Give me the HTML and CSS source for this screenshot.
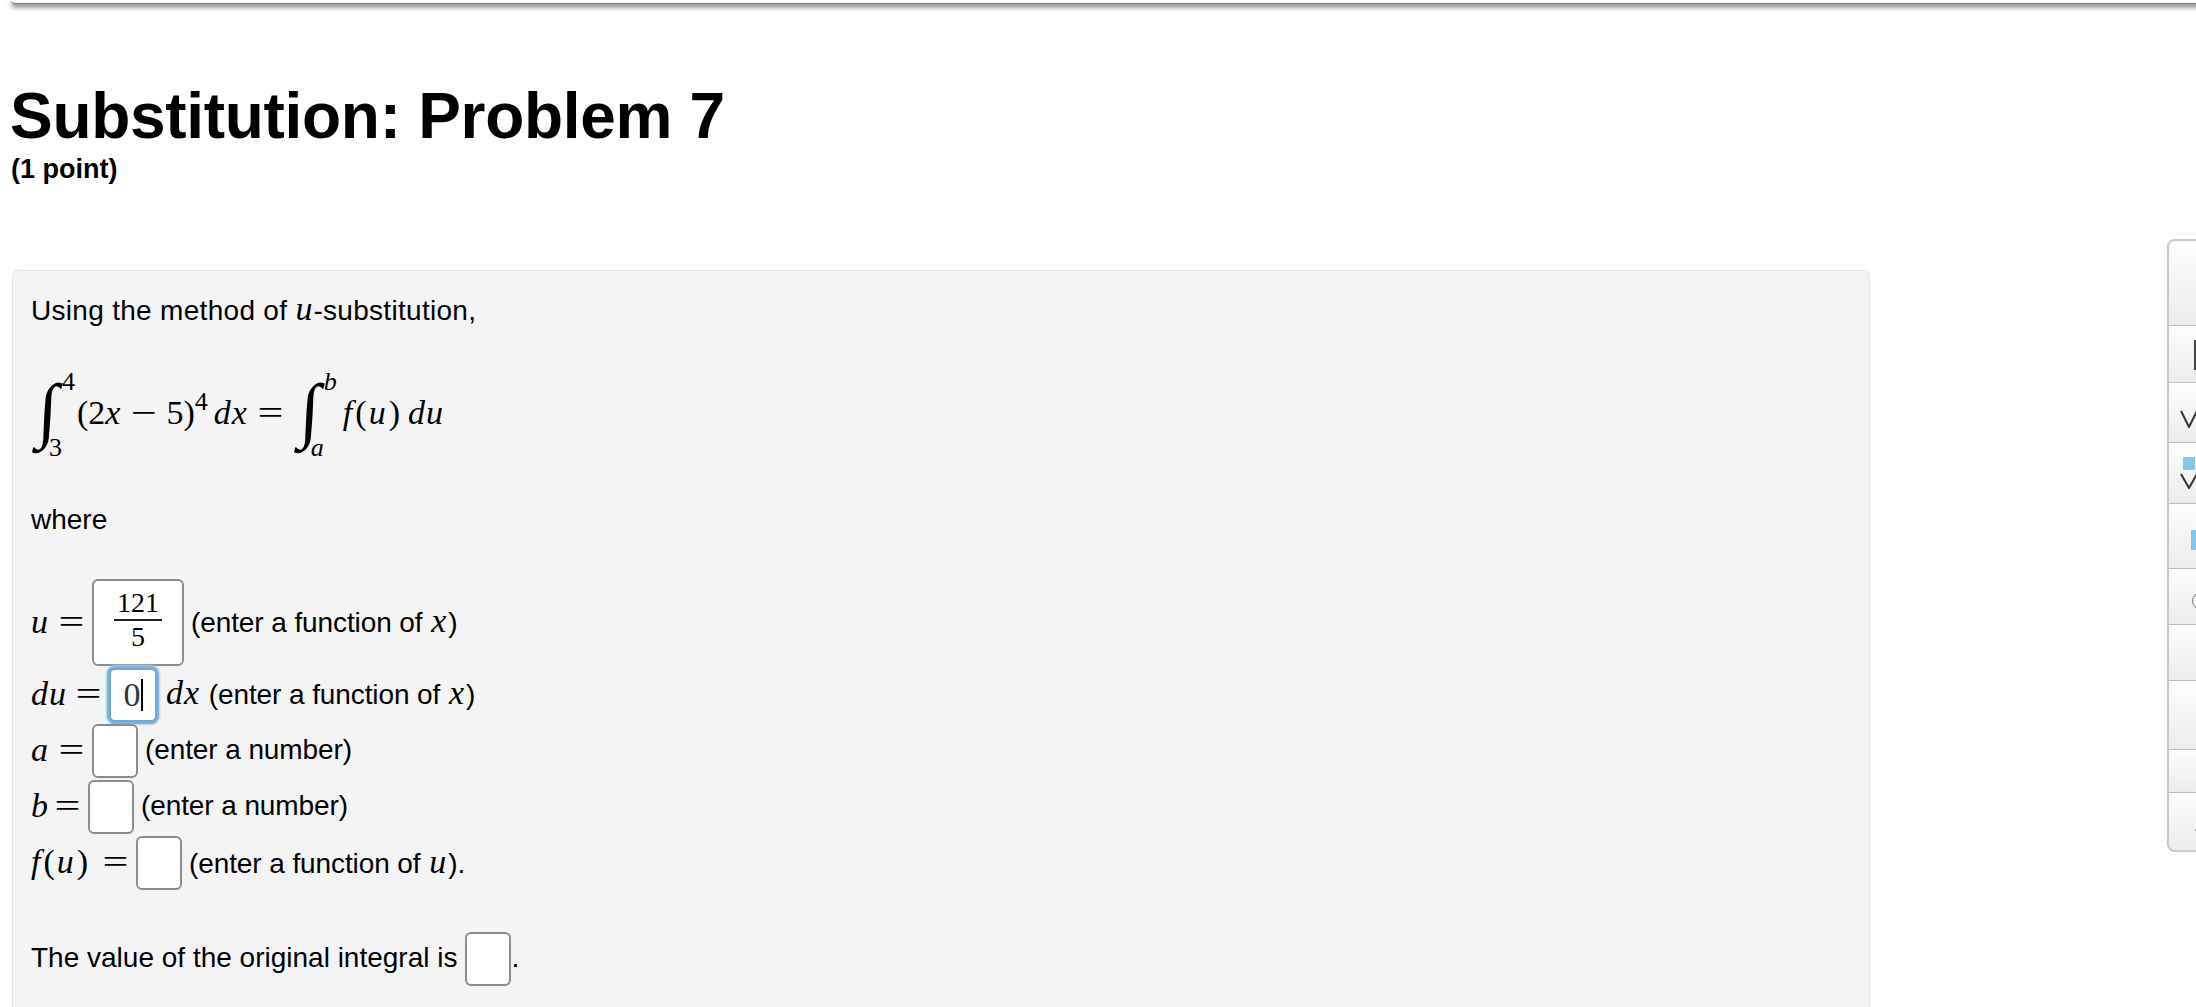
FILE: index.html
```html
<!DOCTYPE html>
<html lang="en">
  <head>
    <meta charset="UTF-8" />
    <title>Substitution: Problem 7</title>
    <link rel="stylesheet" href="styles.css">
  </head>
  <body>
    <div class="topbar"></div>
    <h1>Substitution: Problem 7</h1>
    <div class="points">(1 point)</div>

    <div class="problem">
      <p class="intro">Using the method of <span class="m">u</span>-substitution,</p>

      <div class="equation">
        <span class="int">
          <span class="int-sign">∫</span>
          <span class="limits limits-num">
            <span class="up">4</span>
            <span class="down">3</span>
          </span>
        </span>
        <span class="expr expr-left"><span class="n">(2</span><span class="m">x</span><span class="n op">−</span><span class="n">5)</span><span class="sup">4</span><span class="m dx">dx</span><span class="n op">=</span></span>
        <span class="int">
          <span class="int-sign">∫</span>
          <span class="limits limits-var">
            <span class="up m">b</span>
            <span class="down m">a</span>
          </span>
        </span>
        <span class="expr expr-right"><span class="m">f</span><span class="n paren">(</span><span class="m">u</span><span class="n paren">)</span><span class="m du">du</span></span>
      </div>

      <p class="where">where</p>

      <div class="answers">
        <div class="row row-u">
          <span class="label"><span class="m">u</span><span class="n op">=</span></span>
          <span class="box box-frac">
            <span class="frac"><span class="num">121</span><span class="den">5</span></span>
          </span>
          <span class="hint">(enter a function of <span class="m">x</span>)</span>
        </div>
        <div class="row row-du">
          <span class="label"><span class="m">du</span><span class="n op">=</span></span>
          <span class="box box-focus"><span class="n typed">0</span><span class="caret"></span></span>
          <span class="hint"><span class="m">dx</span> (enter a function of <span class="m">x</span>)</span>
        </div>
        <div class="row row-a">
          <span class="label"><span class="m">a</span><span class="n op">=</span></span>
          <span class="box"></span>
          <span class="hint">(enter a number)</span>
        </div>
        <div class="row row-b">
          <span class="label"><span class="m">b</span><span class="n op">=</span></span>
          <span class="box"></span>
          <span class="hint">(enter a number)</span>
        </div>
        <div class="row row-f">
          <span class="label"><span><span class="m">f</span><span class="n paren">(</span><span class="m">u</span><span class="n paren">)</span></span><span class="n op">=</span></span>
          <span class="box"></span>
          <span class="hint">(enter a function of <span class="m">u</span>).</span>
        </div>
      </div>

      <div class="row row-final">
        <span class="final-text">The value of the original integral is</span>
        <span class="box"></span>
        <span class="final-dot">.</span>
      </div>
    </div>

    <div class="toolbar">
      <div class="tool t1"></div>
      <div class="tool t2"><span class="bar"></span></div>
      <div class="tool t3">
        <svg class="check" width="24" height="18" viewBox="0 0 24 18"><path d="M1 1 L9 17 L17 1" fill="none" stroke="#333" stroke-width="2"/></svg>
      </div>
      <div class="tool t4">
        <span class="sq sq-small"></span>
        <svg class="check" width="24" height="16" viewBox="0 0 24 16"><path d="M1 1 L9 15 L17 1" fill="none" stroke="#333" stroke-width="2"/></svg>
      </div>
      <div class="tool t5"><span class="sq sq-big"></span></div>
      <div class="tool t6"><span class="ring"></span></div>
      <div class="tool t7"></div>
      <div class="tool t8"></div>
      <div class="tool t9"></div>
      <div class="tool t10"><span class="speck"></span></div>
    </div>
  </body>
</html>
```

FILE: styles.css
```css
html,
body {
  margin: 0;
  height: 1007px;
  overflow: hidden;
  background: #fff;
}
body {
  position: relative;
  font-family: "Liberation Sans", Arial, sans-serif;
  font-size: 28px;
  color: #000;
}
.topbar {
  height: 3px;
  margin: 0 -20px 0 11px;
  background: #fff;
  border-bottom: 1px solid #777;
  border-radius: 0 0 6px 6px;
  box-shadow: 0 3px 5px rgba(0, 0, 0, 0.6);
}
h1 {
  margin: 76px 0 0 10px;
  font-size: 64px;
  line-height: 72px;
  letter-spacing: -0.3px;
  font-weight: bold;
}
.points {
  margin: 0 0 0 11px;
  font-size: 27px;
  line-height: 34px;
  font-weight: bold;
}
.problem {
  margin: 84px 0 0 12px;
  width: 1838px;
  height: 800px;
  padding: 0 0 0 18px;
  background: #f4f4f4;
  border: 1px solid #e3e3e3;
  border-radius: 6px;
}
.intro {
  margin: 0;
  padding-top: 20px;
  line-height: 36px;
  letter-spacing: 0.3px;
}
.m {
  font-family: "Liberation Serif", serif;
  font-style: italic;
  font-size: 34px;
  letter-spacing: 1px;
}
.n {
  font-family: "Liberation Serif", serif;
  font-size: 34px;
}
.paren { margin: 0 2px; }
.op {
  display: inline-block;
  width: 23px;
  text-align: center;
  transform: scaleX(1.35);
}
.equation {
  display: flex;
  align-items: center;
  height: 90px;
  margin-top: 42px;
  white-space: pre;
}
.equation .op { margin: 0 11px; }
.int {
  display: flex;
  font-family: "Liberation Serif", serif;
}
.int-sign {
  width: 31px;
  font-size: 72px;
  line-height: 90px;
  transform: translate(7px, -6px) skewX(-3deg);
}
.limits {
  display: flex;
  flex-direction: column;
  justify-content: space-between;
  height: 90px;
  font-size: 26px;
  line-height: 26px;
}
.limits .up { margin-top: -2px; }
.limits .down { margin-left: -13px; }
.limits .m { font-size: 26px; letter-spacing: 0; }
.expr { margin-bottom: 6px; }
.expr-left { margin-left: 2px; }
.expr-right { margin-left: 6px; }
.sup {
  font-family: "Liberation Serif", serif;
  font-size: 26px;
  position: relative;
  top: -14px;
}
.dx { margin-left: 6px; }
.du { margin-left: 6px; }
.where {
  margin: 41px 0 0;
  line-height: 36px;
}
.answers {
  margin-top: 41px;
}
.row {
  display: flex;
  align-items: center;
  white-space: pre;
}
.row-du { height: 57px; }
.row-a { margin-top: 1px; }
.row-b,
.row-f { margin-top: 2px; }
.label {
  display: flex;
  align-items: center;
  justify-content: space-between;
  box-sizing: border-box;
  padding-right: 9px;
  padding-bottom: 2px;
}
.box {
  box-sizing: border-box;
  display: inline-flex;
  align-items: center;
  justify-content: center;
  width: 46px;
  height: 54px;
  background: #fff;
  border: 2px solid #8c8c8c;
  border-radius: 6px;
}
.box-frac {
  width: 92px;
  height: 87px;
}
.box-focus {
  width: 48px;
  height: 54px;
  border-color: #6fa8d6;
  box-shadow: 0 0 0 2px #7fb1da, 0 0 2px 3px #b0d0ea;
}
.frac {
  display: inline-flex;
  flex-direction: column;
  align-items: center;
  margin-bottom: 5px;
  font-family: "Liberation Serif", serif;
  font-size: 28px;
  line-height: 32px;
}
.num {
  padding: 0 3px;
  border-bottom: 2px solid #222;
}
.typed {
  color: #333;
}
.caret {
  width: 2px;
  height: 32px;
  background: #000;
}
.hint {
  margin-left: 7px;
  padding-bottom: 3px;
  letter-spacing: -0.1px;
}
.hint .m { margin: 0 1px; }
.row-du .hint { margin-left: 8px; }
.row-u .label { width: 61px; }
.row-du .label { width: 78px; }
.row-a .label { width: 61px; }
.row-b .label { width: 57px; }
.row-f .label { width: 105px; }
.row-final { margin-top: 42px; }
.final-text {
  margin-right: 8px;
  padding-bottom: 2px;
}
.final-dot { padding-bottom: 2px; }
.toolbar {
  position: absolute;
  top: 239px;
  left: 2167px;
  width: 60px;
  box-sizing: border-box;
  border: 2px solid #c8c8c8;
  border-radius: 8px;
  overflow: hidden;
}
.tool {
  position: relative;
  box-sizing: border-box;
  background: linear-gradient(#fdfdfd, #ececec);
  border-bottom: 1px solid #bdbdbd;
}
.tool:last-child { border-bottom: 0; }
.t1 { height: 85px; }
.t2 { height: 57px; }
.t3 { height: 60px; }
.t4 { height: 61px; }
.t5 { height: 65px; }
.t6 { height: 56px; }
.t7 { height: 56px; }
.t8 { height: 69px; }
.t9 { height: 43px; }
.t10 { height: 57px; }
.bar {
  position: absolute;
  left: 25px;
  top: 14px;
  width: 3px;
  height: 30px;
  background: #444;
}
.check {
  position: absolute;
  left: 11px;
}
.t3 .check { top: 27px; }
.t4 .check { top: 30px; }
.sq {
  position: absolute;
  background: #84c8e6;
}
.sq-small {
  left: 14px;
  top: 14px;
  width: 12px;
  height: 13px;
}
.sq-big {
  left: 22px;
  top: 26px;
  width: 14px;
  height: 20px;
}
.ring {
  position: absolute;
  left: 23px;
  top: 23px;
  width: 16px;
  height: 16px;
  border: 1px solid #777;
  border-radius: 50%;
}
.speck {
  position: absolute;
  left: 26px;
  top: 36px;
  width: 2px;
  height: 2px;
  background: #999;
}
```
